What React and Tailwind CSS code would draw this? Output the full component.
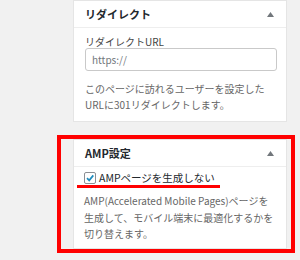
import React from "react";

const font = { fontFamily: '"Noto Sans CJK JP", "Noto Sans", sans-serif' };

const Toggle = () => (
  <svg width="7" height="5" viewBox="0 0 7 5" className="shrink-0">
    <path d="M3.5 0 L7 5 L0 5 Z" fill="#72777c" />
  </svg>
);

const Panel = ({ title, children }) => (
  <div className="w-[214px] bg-white border border-[#e5e5e5]">
    <div className="h-[27px] flex items-center justify-between pl-[11px] pr-[12px] border-b border-[#eeeeee]">
      <span className="text-[11px] font-bold text-[#23282d]">{title}</span>
      <Toggle />
    </div>
    {children}
  </div>
);

export default function App() {
  return (
    <div className="w-[300px] h-[260px] bg-[#f1f1f1] overflow-hidden" style={font}>
      <div className="pl-[73px]">
        <Panel title="リダイレクト">
          <div className="pl-[11px] pr-[9px] pt-[7px] pb-[8px]">
            <div className="text-[10px] leading-[13px] text-[#444]">リダイレクトURL</div>
            <div className="w-[192px] h-[23px] border border-[#c9c9c9] rounded-[3px] flex items-center px-[6px] text-[10px] text-[#72777c]">
              https://
            </div>
            <p className="mt-[10px] text-[10px] leading-[16px] text-[#666]">
              このページに訪れるユーザーを設定した
              <br />
              URLに301リダイレクトします。
            </p>
          </div>
        </Panel>
      </div>

      <div className="pl-[57px] mt-[13px]">
        <div className="w-[238px] border-4 border-[#ff0000] pl-[12px] pr-[4px] bg-[#f1f1f1]">
          <Panel title="AMP設定">
            <div className="pl-[10px] pr-[9px] pt-[5px] pb-[5px]">
              <div className="relative flex items-center gap-[3px] h-[12px]">
                <span className="w-[12px] h-[12px] border border-[#8c8f94] rounded-[2px] bg-white flex items-center justify-center">
                  <svg width="10" height="10" viewBox="0 0 10 10">
                    <path d="M2 5.2 L4.2 7.4 L8.3 2.4" fill="none" stroke="#1e8cbe" strokeWidth="1.7" />
                  </svg>
                </span>
                <span className="text-[10.5px] text-[#23282d] leading-[12px]">AMPページを生成しない</span>
                <span className="absolute left-[-7px] top-[13px] w-[143px] h-[3px] bg-[#ff0000]" />
              </div>
              <p className="mt-[9px] text-[10px] leading-[16.5px] text-[#666]">
                AMP(Accelerated Mobile Pages)ページを
                <br />
                生成して、モバイル端末に最適化するかを
                <br />
                切り替えます。
              </p>
            </div>
          </Panel>
        </div>
      </div>
    </div>
  );
}
